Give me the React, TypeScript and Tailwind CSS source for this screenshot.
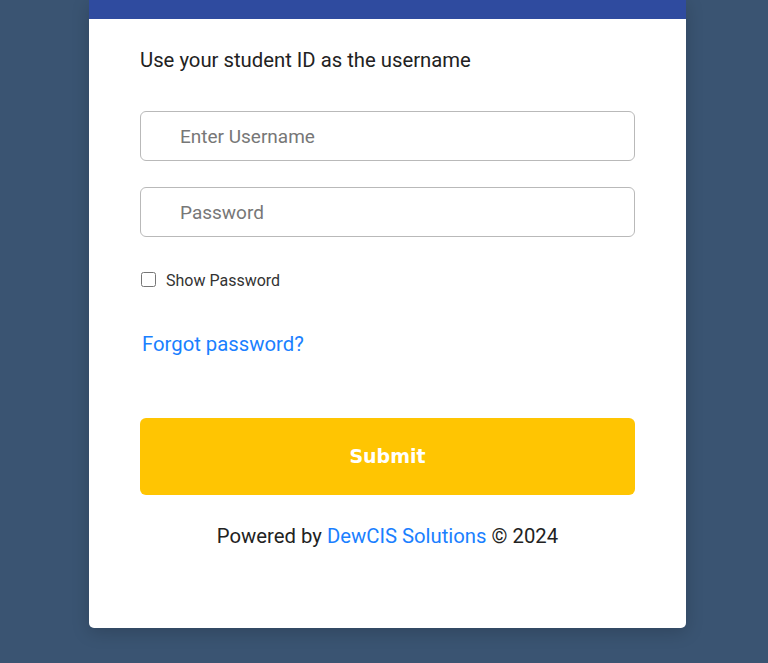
import { useState } from "react";

export default function App() {
  const [show, setShow] = useState(false);

  return (
    <div className="h-[663px] w-[768px] overflow-hidden bg-[#3a5472] font-['Roboto',sans-serif]">
      <div className="ml-[89px] w-[597px] overflow-hidden rounded-b-[5px] bg-white shadow-[0_4px_18px_rgba(0,0,0,0.18)]">
        {/* Header band */}
        <div className="h-[19px] bg-[#2f4b9f]" />

        <div className="px-[51px] pb-[78px] pt-[27px]">
          <p className="text-[20.3px] leading-[28px] text-[#222]">Use your student ID as the username</p>

          <input
            type="text"
            placeholder="Enter Username"
            className="mt-[37px] block h-[50px] w-full rounded-[6px] border border-[#b9b9b9] pl-[39px] text-[19px] text-[#333] outline-none placeholder:text-[#777]"
          />
          <input
            type={show ? "text" : "password"}
            placeholder="Password"
            className="mt-[26px] block h-[50px] w-full rounded-[6px] border border-[#b9b9b9] pl-[39px] text-[19px] text-[#333] outline-none placeholder:text-[#777]"
          />

          <label className="mt-[32px] flex items-center gap-[10px] text-[16px] leading-[20px] text-[#333]">
            <input
              type="checkbox"
              checked={show}
              onChange={(e) => setShow(e.target.checked)}
              className="ml-px h-[15px] w-[15px]"
            />
            <span className="translate-y-[2px]">Show Password</span>
          </label>

          <a href="#" className="mt-[41px] ml-[2px] block text-[20.3px] leading-[28px] text-[#1a80ff]">
            Forgot password?
          </a>

          <button
            type="button"
            className="mt-[60px] flex h-[77px] w-full items-center justify-center rounded-[6px] bg-[#ffc502] font-['DejaVu_Sans',sans-serif] text-[19px] font-bold text-white"
          >
            Submit
          </button>

          <p className="mt-[27px] text-center text-[20.3px] leading-[28px] text-[#222]">
            Powered by <a href="#" className="text-[#1a80ff]">DewCIS Solutions</a> © 2024
          </p>
        </div>
      </div>
    </div>
  );
}
